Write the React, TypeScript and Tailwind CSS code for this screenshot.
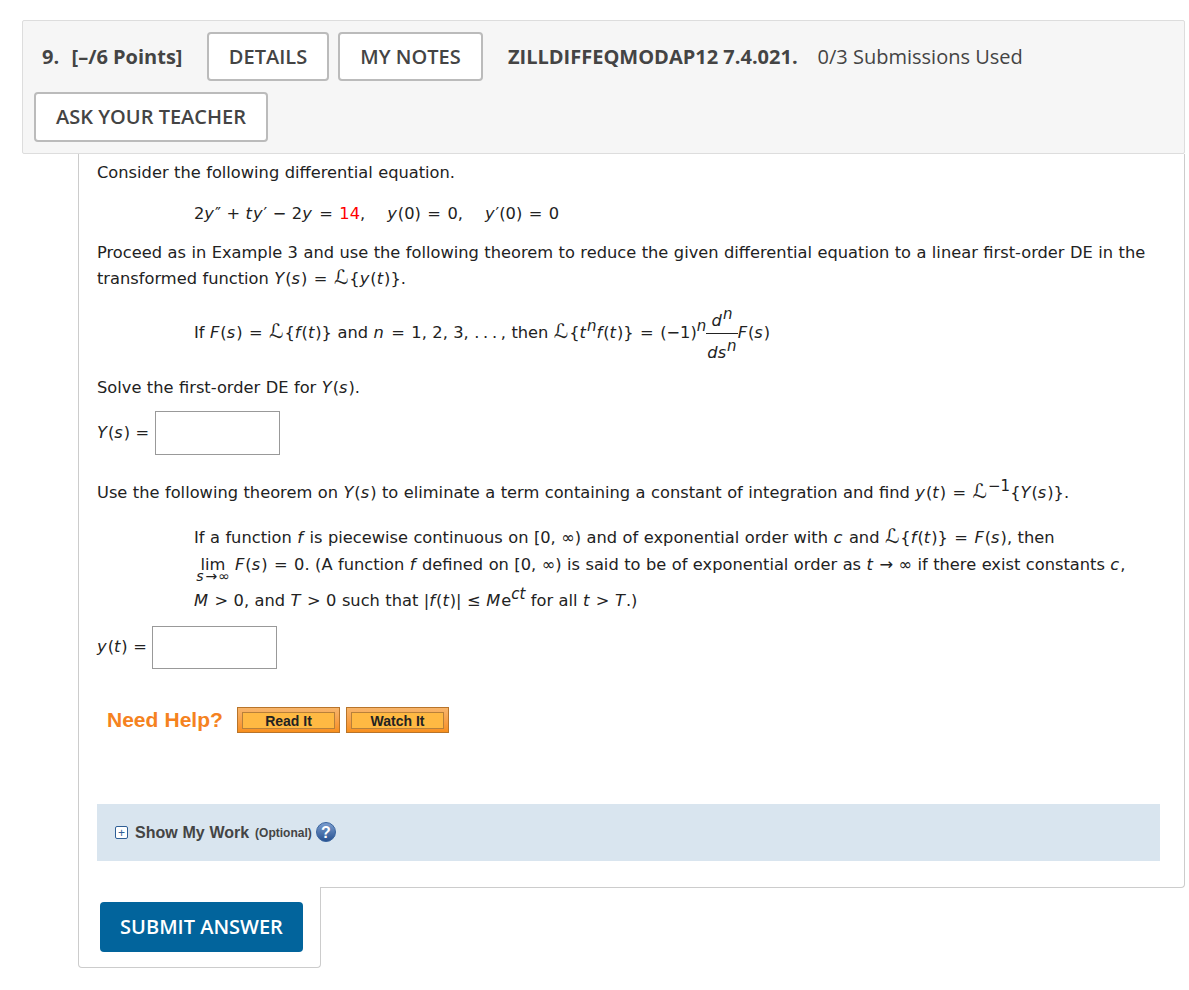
import type { ReactNode } from 'react'

const I = ({ children }: { children: ReactNode }) => <i className="pr-[1px]">{children}</i>

const Eq = ({ children = '=' }: { children?: ReactNode }) => <span className="mx-[1px]">{children}</span>

const Laplace = () => <span className="mr-[1px] text-[20px] leading-none italic">ℒ</span>

const Sup = ({ children }: { children: ReactNode }) => <sup className="text-[15px] italic">{children}</sup>

function HeadButton({ children, className }: { children: ReactNode; className: string }) {
  return (
    <button
      type="button"
      className={`flex items-center justify-center rounded-[4px] border-2 border-[#bbbbbb] bg-white text-[20px] font-semibold text-[#444444] ${className}`}
    >
      {children}
    </button>
  )
}

function HelpButton({ children, className }: { children: ReactNode; className: string }) {
  return (
    <button type="button" className={`h-[26px] border border-[#b8742a] bg-gradient-to-b from-[#f7b46a] to-[#f88f1a] p-[4px] pb-[3px] ${className}`}>
      <span className="flex h-full items-center justify-center border border-[#b8803a] bg-[#ffb943] font-['Liberation_Sans',sans-serif] text-[14px] font-bold leading-none text-[#222222]">
        {children}
      </span>
    </button>
  )
}

function HelpIcon() {
  return (
    <svg width="20" height="20" viewBox="0 0 20 20" className="ml-[4px] mb-[2px]">
      <defs>
        <linearGradient id="hlp" x1="0" y1="0" x2="0" y2="1">
          <stop offset="0" stopColor="#7d9fd0" />
          <stop offset="1" stopColor="#27508f" />
        </linearGradient>
      </defs>
      <circle cx="10" cy="10" r="9.5" fill="url(#hlp)" stroke="#3a659f" />
      <text x="10" y="15.5" textAnchor="middle" fontFamily="Liberation Sans" fontWeight="700" fontSize="16" fill="#fff">?</text>
    </svg>
  )
}

export default function App() {
  return (
    <div className="min-h-[990px] bg-white pl-[22px] pr-[4px] pt-[20px] font-['Open_Sans',sans-serif]">
      {/* Question header */}
      <div className="h-[134px] rounded-[2px] border border-[#dddddd] bg-[#f6f6f6] pl-[11px] pt-[11px]">
        <div className="flex h-[49px] items-center text-[20px] text-[#444444]">
          <span className="ml-[8px] w-[165px] font-bold whitespace-pre">9.  <span className="ml-[2px]">[–/6 Points]</span></span>
          <HeadButton className="h-[49px] w-[122px]">DETAILS</HeadButton>
          <HeadButton className="ml-[9px] h-[49px] w-[145px]">MY NOTES</HeadButton>
          <span className="ml-[25px] font-bold">ZILLDIFFEQMODAP12 7.4.021.</span>
          <span className="ml-[20px]">0/3 Submissions Used</span>
        </div>
        <HeadButton className="mt-[11px] h-[50px] w-[234px]">ASK YOUR TEACHER</HeadButton>
      </div>

      {/* Question body */}
      <div className="ml-[56px] h-[734px] rounded-br-[4px] border-x border-b border-[#cccccc] pl-[18px] pr-[24px] font-['DejaVu_Sans',sans-serif] text-[16.25px] leading-[26px] text-[#222222] [word-spacing:0.3px]">
        <p className="pt-[6px]">Consider the following differential equation.</p>
        <p className="ml-[97px] mt-[15px] whitespace-pre">
          2<I>y</I>″ + <I>t</I><I>y</I>′ − 2<I>y</I> <Eq /> <span className="text-[#ff0000]">14</span>,<span className="ml-[22px]" /><I>y</I>(0) <Eq /> 0,<span className="ml-[22px]" /><I>y</I>′(0) <Eq /> 0
        </p>
        <p className="mt-[13px]">
          Proceed as in Example 3 and use the following theorem to reduce the given differential equation to a linear first-order DE in the transformed function <I>Y</I>(<I>s</I>) <Eq /> <Laplace />{'{'}<I>y</I>(<I>t</I>){'}'}.
        </p>
        <p className="ml-[97px] mt-[5px] whitespace-pre">
          If <I>F</I>(<I>s</I>) <Eq /> <Laplace />{'{'}<I>f</I>(<I>t</I>){'}'} and <I>n</I> <Eq /> 1, 2, 3, <span className="[word-spacing:-1.5px]">. . . ,</span> then <Laplace />{'{'}<I>t</I><Sup>n</Sup><I>f</I>(<I>t</I>){'}'} <Eq /> (−1)<Sup>n</Sup>
          <span className="inline-flex flex-col items-center align-middle">
            <span className="w-full border-b border-[#222222] pt-[12px] text-center leading-[24px]"><I>d</I><Sup>n</Sup></span>
            <span className="px-[1px] pt-[2px] leading-[34px]"><I>ds</I><Sup>n</Sup></span>
          </span>
          <I>F</I>(<I>s</I>)
        </p>
        <p className="mt-[5px]">Solve the first-order DE for <I>Y</I>(<I>s</I>).</p>
        <div className="mt-[10px] flex h-[44px] items-center">
          <span className="w-[58px]"><I>Y</I>(<I>s</I>) =</span>
          <input className="h-[44px] w-[125px] border border-[#999999] bg-white" />
        </div>
        <p className="mt-[25px]">
          Use the following theorem on <I>Y</I>(<I>s</I>) to eliminate a term containing a constant of integration and find <I>y</I>(<I>t</I>) <Eq /> <Laplace /><sup className="text-[15px]">−1</sup>{'{'}<I>Y</I>(<I>s</I>){'}'}.
        </p>
        <div className="ml-[97px] mt-[19px] w-[950px]">
          <p>If a function <I>f</I> is piecewise continuous on [0, ∞) and of exponential order with <I>c</I> and <Laplace />{'{'}<I>f</I>(<I>t</I>){'}'} <Eq /> <I>F</I>(<I>s</I>), then</p>
          <p className="mt-[1px] whitespace-nowrap">
            <span className="mr-[3px] inline-flex w-[38px] flex-col items-center align-top">
              <span>lim</span>
              <span className="mt-[-8px] whitespace-nowrap text-[14px] leading-[12px]"><I>s</I><span className="mx-[1px]">→</span>∞</span>
            </span>
            <I>F</I>(<I>s</I>) <Eq /> 0. (A function <I>f</I> defined on [0, ∞) is said to be of exponential order as <I>t</I> → ∞ if there exist constants <I>c</I>,
          </p>
          <p className="mt-[6px]">
            <I>M</I> &gt; 0, and <I>T</I> &gt; 0 such that |<I>f</I>(<I>t</I>)| ≤ <I>M</I>e<Sup>ct</Sup> for all <I>t</I> &gt; <I>T</I>.)
          </p>
        </div>
        <div className="mt-[11px] flex h-[44px] items-center">
          <span className="w-[55px]"><I>y</I>(<I>t</I>) =</span>
          <input className="h-[43px] w-[125px] border border-[#999999] bg-white" />
        </div>

        <div className="ml-[10px] mt-[38px] flex h-[26px] items-center">
          <span className="w-[130px] font-['Liberation_Sans',sans-serif] text-[21px] font-bold text-[#f58220]">Need Help?</span>
          <HelpButton className="w-[103px]">Read It</HelpButton>
          <HelpButton className="ml-[6px] w-[103px]">Watch It</HelpButton>
        </div>

        <div className="mt-[71px] flex h-[57px] items-center bg-[#d9e5ef] pl-[18px] font-['Liberation_Sans',sans-serif] text-[#444444]">
          <span className="mr-[7px] flex h-[13px] w-[13px] items-center justify-center rounded-[2px] border border-[#2f5f96] bg-white text-[12px] leading-none text-[#2f5f96]">+</span>
          <span className="text-[16px] font-bold">Show My Work</span>
          <span className="ml-[6px] text-[12px] font-bold">(Optional)</span>
          <HelpIcon />
        </div>
      </div>

      {/* Submit tab */}
      <div className="relative ml-[56px] mt-[-1px] h-[81px] w-[243px] rounded-b-[4px] border-x border-b border-[#cccccc] bg-white pl-[21px] pt-[15px]">
        <button type="button" className="h-[50px] w-[203px] rounded-[4px] bg-[#02649c] text-[20px] font-semibold text-white">
          SUBMIT ANSWER
        </button>
      </div>
    </div>
  )
}
